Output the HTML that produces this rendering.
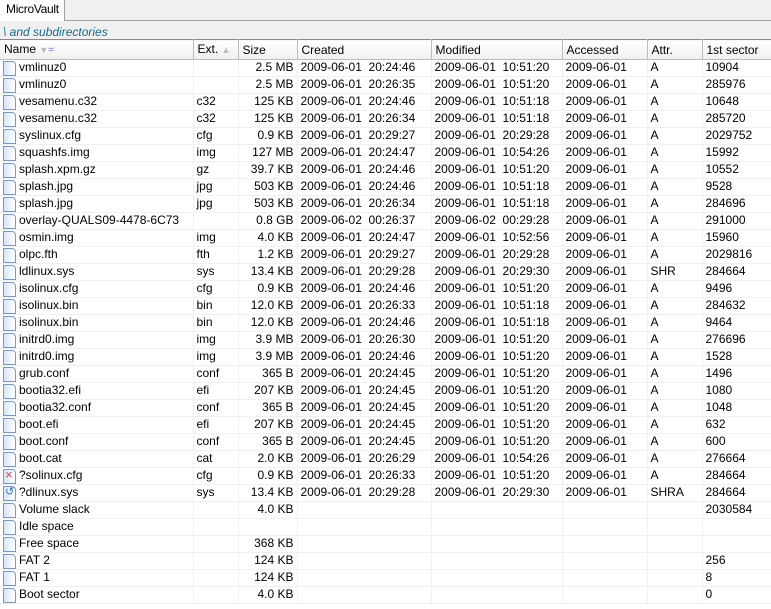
<!DOCTYPE html>
<html><head><meta charset="utf-8"><style>
*{margin:0;padding:0;box-sizing:border-box}
body{width:771px;height:609px;background:#fff;font-family:"Liberation Sans",Arial,sans-serif;font-size:12px;color:#000;overflow:hidden;position:relative}
.tabbar{position:absolute;left:0;top:0;width:771px;height:21px;background:#f0f0f0;border-bottom:1px solid #a0a0a0}
.tab{position:absolute;left:0;top:0;width:65px;height:22px;background:#fff;border-right:1px solid #a0a0a0;font-size:12px;line-height:19px;padding-left:6px;letter-spacing:-0.3px}
.path{position:absolute;left:0;top:21px;width:771px;height:19px;background:#f0f0f0;border-bottom:1px solid #888;color:#1a6b8a;font-style:italic;line-height:22px;padding-left:3px}
table{position:absolute;left:0;top:39px;border-collapse:collapse;table-layout:fixed;width:771px}
th{height:17px;font-weight:normal;text-align:left;padding:1px 0 0 4px;background:linear-gradient(#fff,#f0f0f0);border-right:1px solid #bdbdbd;border-bottom:1px solid #bdbdbd;border-top:1px solid #888;color:#000;line-height:17px;white-space:nowrap;overflow:hidden}
td{height:17px;padding:0 3px;border-right:1px solid #f0f0f0;border-bottom:1px solid #f0f0f0;white-space:nowrap;overflow:hidden;line-height:15px;vertical-align:top}
td.n{padding-left:19px;position:relative}
td.n i{position:absolute;left:3px;top:1px;width:13px;height:15px;border:1px solid #7a98c0;background:linear-gradient(90deg,#d8e6f8,#fff);border-radius:0 4px 0 0}
td.n i.x::after{content:"×";position:absolute;left:1px;top:-3px;color:#d04060;font-size:13px;font-style:normal}
td.n i.r::after{content:"↺";position:absolute;left:1px;top:-2px;color:#3070c0;font-size:11px;font-style:normal}
td.r{text-align:right;padding-right:3px}
.ar{color:#bbb;font-size:9px}
</style></head><body>
<div class="tabbar"></div><div class="tab">MicroVault</div>
<div class="path">\ and subdirectories</div>
<table>
<colgroup><col style="width:193px"><col style="width:45px"><col style="width:59px"><col style="width:134px"><col style="width:131px"><col style="width:85px"><col style="width:55px"><col style="width:69px"></colgroup>
<tr><th>Name <span class="ar">▼</span><span style="color:#66f;font-size:10px">=</span></th><th>Ext. <span class="ar">▲</span></th><th>Size</th><th>Created</th><th>Modified</th><th>Accessed</th><th>Attr.</th><th>1st sector</th></tr>
<tr><td class="n"><i></i>vmlinuz0</td><td></td><td class="r">2.5 MB</td><td>2009-06-01&nbsp; 20:24:46</td><td>2009-06-01&nbsp; 10:51:20</td><td>2009-06-01</td><td>A</td><td>10904</td></tr>
<tr><td class="n"><i></i>vmlinuz0</td><td></td><td class="r">2.5 MB</td><td>2009-06-01&nbsp; 20:26:35</td><td>2009-06-01&nbsp; 10:51:20</td><td>2009-06-01</td><td>A</td><td>285976</td></tr>
<tr><td class="n"><i></i>vesamenu.c32</td><td>c32</td><td class="r">125 KB</td><td>2009-06-01&nbsp; 20:24:46</td><td>2009-06-01&nbsp; 10:51:18</td><td>2009-06-01</td><td>A</td><td>10648</td></tr>
<tr><td class="n"><i></i>vesamenu.c32</td><td>c32</td><td class="r">125 KB</td><td>2009-06-01&nbsp; 20:26:34</td><td>2009-06-01&nbsp; 10:51:18</td><td>2009-06-01</td><td>A</td><td>285720</td></tr>
<tr><td class="n"><i></i>syslinux.cfg</td><td>cfg</td><td class="r">0.9 KB</td><td>2009-06-01&nbsp; 20:29:27</td><td>2009-06-01&nbsp; 20:29:28</td><td>2009-06-01</td><td>A</td><td>2029752</td></tr>
<tr><td class="n"><i></i>squashfs.img</td><td>img</td><td class="r">127 MB</td><td>2009-06-01&nbsp; 20:24:47</td><td>2009-06-01&nbsp; 10:54:26</td><td>2009-06-01</td><td>A</td><td>15992</td></tr>
<tr><td class="n"><i></i>splash.xpm.gz</td><td>gz</td><td class="r">39.7 KB</td><td>2009-06-01&nbsp; 20:24:46</td><td>2009-06-01&nbsp; 10:51:20</td><td>2009-06-01</td><td>A</td><td>10552</td></tr>
<tr><td class="n"><i></i>splash.jpg</td><td>jpg</td><td class="r">503 KB</td><td>2009-06-01&nbsp; 20:24:46</td><td>2009-06-01&nbsp; 10:51:18</td><td>2009-06-01</td><td>A</td><td>9528</td></tr>
<tr><td class="n"><i></i>splash.jpg</td><td>jpg</td><td class="r">503 KB</td><td>2009-06-01&nbsp; 20:26:34</td><td>2009-06-01&nbsp; 10:51:18</td><td>2009-06-01</td><td>A</td><td>284696</td></tr>
<tr><td class="n"><i></i>overlay-QUALS09-4478-6C73</td><td></td><td class="r">0.8 GB</td><td>2009-06-02&nbsp; 00:26:37</td><td>2009-06-02&nbsp; 00:29:28</td><td>2009-06-01</td><td>A</td><td>291000</td></tr>
<tr><td class="n"><i></i>osmin.img</td><td>img</td><td class="r">4.0 KB</td><td>2009-06-01&nbsp; 20:24:47</td><td>2009-06-01&nbsp; 10:52:56</td><td>2009-06-01</td><td>A</td><td>15960</td></tr>
<tr><td class="n"><i></i>olpc.fth</td><td>fth</td><td class="r">1.2 KB</td><td>2009-06-01&nbsp; 20:29:27</td><td>2009-06-01&nbsp; 20:29:28</td><td>2009-06-01</td><td>A</td><td>2029816</td></tr>
<tr><td class="n"><i></i>ldlinux.sys</td><td>sys</td><td class="r">13.4 KB</td><td>2009-06-01&nbsp; 20:29:28</td><td>2009-06-01&nbsp; 20:29:30</td><td>2009-06-01</td><td>SHR</td><td>284664</td></tr>
<tr><td class="n"><i></i>isolinux.cfg</td><td>cfg</td><td class="r">0.9 KB</td><td>2009-06-01&nbsp; 20:24:46</td><td>2009-06-01&nbsp; 10:51:20</td><td>2009-06-01</td><td>A</td><td>9496</td></tr>
<tr><td class="n"><i></i>isolinux.bin</td><td>bin</td><td class="r">12.0 KB</td><td>2009-06-01&nbsp; 20:26:33</td><td>2009-06-01&nbsp; 10:51:18</td><td>2009-06-01</td><td>A</td><td>284632</td></tr>
<tr><td class="n"><i></i>isolinux.bin</td><td>bin</td><td class="r">12.0 KB</td><td>2009-06-01&nbsp; 20:24:46</td><td>2009-06-01&nbsp; 10:51:18</td><td>2009-06-01</td><td>A</td><td>9464</td></tr>
<tr><td class="n"><i></i>initrd0.img</td><td>img</td><td class="r">3.9 MB</td><td>2009-06-01&nbsp; 20:26:30</td><td>2009-06-01&nbsp; 10:51:20</td><td>2009-06-01</td><td>A</td><td>276696</td></tr>
<tr><td class="n"><i></i>initrd0.img</td><td>img</td><td class="r">3.9 MB</td><td>2009-06-01&nbsp; 20:24:46</td><td>2009-06-01&nbsp; 10:51:20</td><td>2009-06-01</td><td>A</td><td>1528</td></tr>
<tr><td class="n"><i></i>grub.conf</td><td>conf</td><td class="r">365 B</td><td>2009-06-01&nbsp; 20:24:45</td><td>2009-06-01&nbsp; 10:51:20</td><td>2009-06-01</td><td>A</td><td>1496</td></tr>
<tr><td class="n"><i></i>bootia32.efi</td><td>efi</td><td class="r">207 KB</td><td>2009-06-01&nbsp; 20:24:45</td><td>2009-06-01&nbsp; 10:51:20</td><td>2009-06-01</td><td>A</td><td>1080</td></tr>
<tr><td class="n"><i></i>bootia32.conf</td><td>conf</td><td class="r">365 B</td><td>2009-06-01&nbsp; 20:24:45</td><td>2009-06-01&nbsp; 10:51:20</td><td>2009-06-01</td><td>A</td><td>1048</td></tr>
<tr><td class="n"><i></i>boot.efi</td><td>efi</td><td class="r">207 KB</td><td>2009-06-01&nbsp; 20:24:45</td><td>2009-06-01&nbsp; 10:51:20</td><td>2009-06-01</td><td>A</td><td>632</td></tr>
<tr><td class="n"><i></i>boot.conf</td><td>conf</td><td class="r">365 B</td><td>2009-06-01&nbsp; 20:24:45</td><td>2009-06-01&nbsp; 10:51:20</td><td>2009-06-01</td><td>A</td><td>600</td></tr>
<tr><td class="n"><i></i>boot.cat</td><td>cat</td><td class="r">2.0 KB</td><td>2009-06-01&nbsp; 20:26:29</td><td>2009-06-01&nbsp; 10:54:26</td><td>2009-06-01</td><td>A</td><td>276664</td></tr>
<tr><td class="n"><i class="x"></i>?solinux.cfg</td><td>cfg</td><td class="r">0.9 KB</td><td>2009-06-01&nbsp; 20:26:33</td><td>2009-06-01&nbsp; 10:51:20</td><td>2009-06-01</td><td>A</td><td>284664</td></tr>
<tr><td class="n"><i class="r"></i>?dlinux.sys</td><td>sys</td><td class="r">13.4 KB</td><td>2009-06-01&nbsp; 20:29:28</td><td>2009-06-01&nbsp; 20:29:30</td><td>2009-06-01</td><td>SHRA</td><td>284664</td></tr>
<tr><td class="n"><i></i>Volume slack</td><td></td><td class="r">4.0 KB</td><td></td><td></td><td></td><td></td><td>2030584</td></tr>
<tr><td class="n"><i></i>Idle space</td><td></td><td class="r"></td><td></td><td></td><td></td><td></td><td></td></tr>
<tr><td class="n"><i></i>Free space</td><td></td><td class="r">368 KB</td><td></td><td></td><td></td><td></td><td></td></tr>
<tr><td class="n"><i></i>FAT 2</td><td></td><td class="r">124 KB</td><td></td><td></td><td></td><td></td><td>256</td></tr>
<tr><td class="n"><i></i>FAT 1</td><td></td><td class="r">124 KB</td><td></td><td></td><td></td><td></td><td>8</td></tr>
<tr><td class="n"><i></i>Boot sector</td><td></td><td class="r">4.0 KB</td><td></td><td></td><td></td><td></td><td>0</td></tr>
</table>
</body></html>
